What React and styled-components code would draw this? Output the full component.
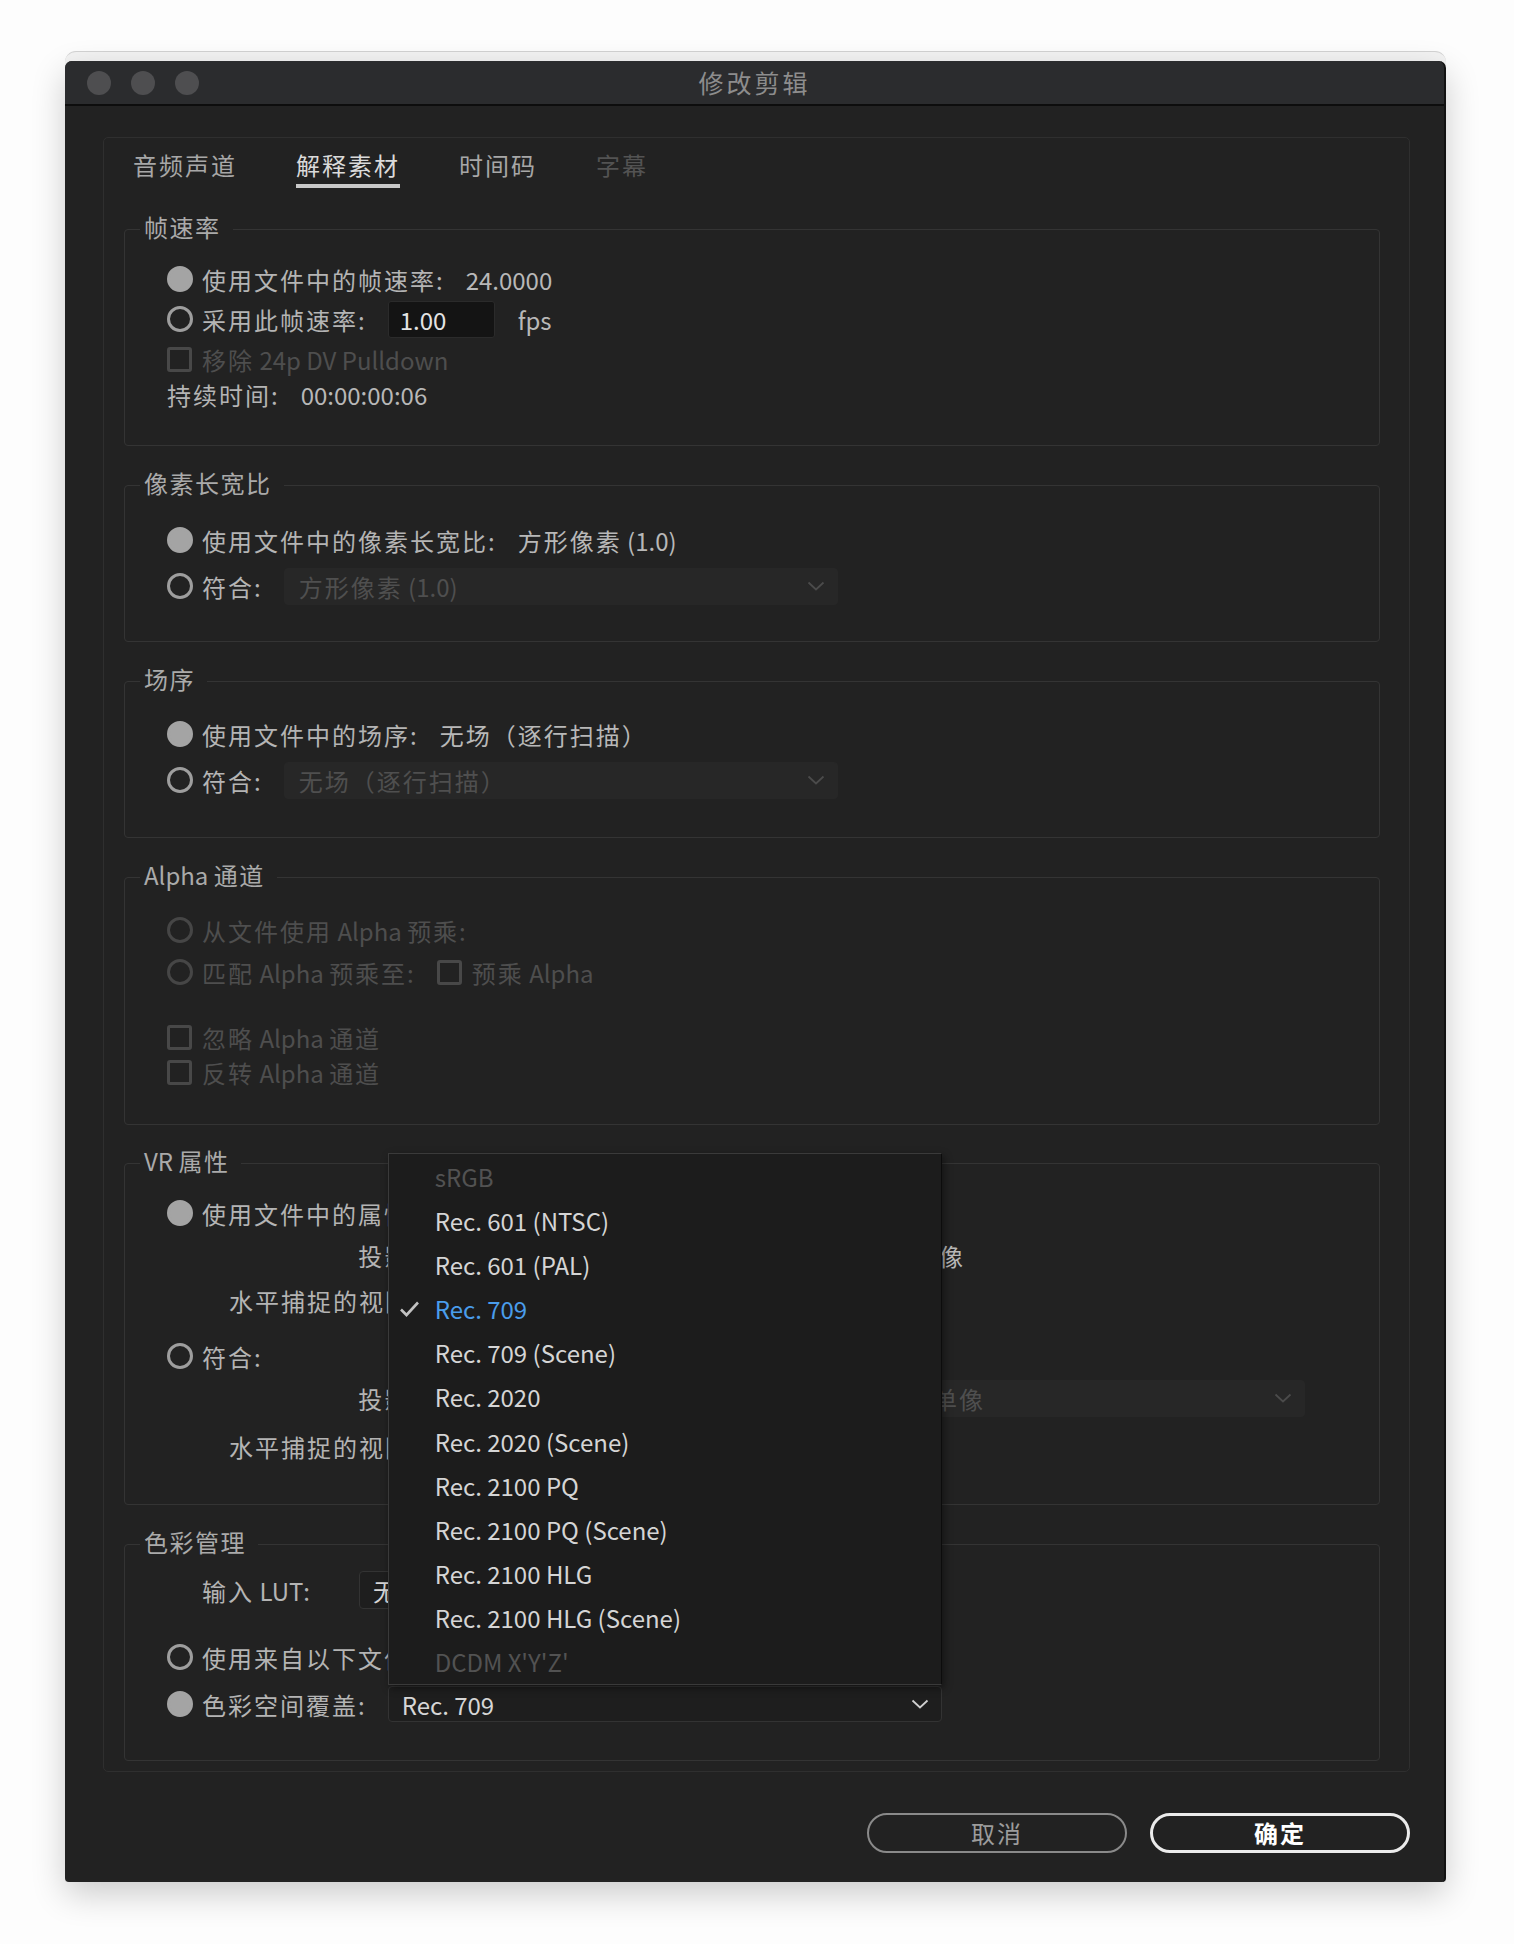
import React from "react";
import styled, { createGlobalStyle } from "styled-components";

const GlobalStyle = createGlobalStyle`
  html, body {
    margin: 0;
    padding: 0;
    background: #fdfdfd;
  }
  body {
    font-family: "Noto Sans CJK SC", "Noto Sans", sans-serif;
    -webkit-font-smoothing: antialiased;
  }
  * {
    box-sizing: border-box;
  }
`;

const tones = {
  normal: "#b4b4b4",
  bright: "#d6d6d6",
  off: "#4e4e4e",
};

const menuItems = [
  { label: "sRGB", disabled: true },
  { label: "Rec. 601 (NTSC)" },
  { label: "Rec. 601 (PAL)" },
  { label: "Rec. 709", selected: true },
  { label: "Rec. 709 (Scene)" },
  { label: "Rec. 2020" },
  { label: "Rec. 2020 (Scene)" },
  { label: "Rec. 2100 PQ" },
  { label: "Rec. 2100 PQ (Scene)" },
  { label: "Rec. 2100 HLG" },
  { label: "Rec. 2100 HLG (Scene)" },
  { label: "DCDM X'Y'Z'", disabled: true },
];

function Chevron({ color }) {
  return (
    <svg width="18" height="10" viewBox="0 0 18 10">
      <path d="M1.5 1.5 L9 8.5 L16.5 1.5" fill="none" stroke={color} strokeWidth="1.8" />
    </svg>
  );
}

function Tick() {
  return (
    <svg width="21" height="18" viewBox="0 0 21 18">
      <path d="M2 9.5 L7.5 15 L19 2.5" fill="none" stroke="#c2c2c2" strokeWidth="2.6" />
    </svg>
  );
}

function Dropdown({ value, width, disabled, ml, h, children }) {
  return (
    <SelectBox $w={width} $off={disabled} $ml={ml} $h={h}>
      <span>{value}</span>
      <Chevron color={disabled ? "#4b4b4b" : "#cfcfcf"} />
      {children}
    </SelectBox>
  );
}

function ColorMenu() {
  return (
    <Menu>
      {menuItems.map((item) => (
        <MenuItem key={item.label} $off={item.disabled} $on={item.selected}>
          <TickSlot>{item.selected ? <Tick /> : null}</TickSlot>
          {item.label}
        </MenuItem>
      ))}
    </Menu>
  );
}

export default function App() {
  return (
    <Page>
      <GlobalStyle />
      <Frame>
        <Window>
          <TitleBar>
            <Lights>
              <Light />
              <Light />
              <Light />
            </Lights>
            <Title>修改剪辑</Title>
            <span />
          </TitleBar>

          <Body>
            <Panel>
              <Tabs>
                <Tab>音频声道</Tab>
                <Tab $active>解释素材</Tab>
                <Tab>时间码</Tab>
                <Tab $off>字幕</Tab>
              </Tabs>

              <Group $mt={27}>
                <Legend>帧速率</Legend>
                <Rows $pt={16} $pb={36}>
                  <Row>
                    <Radio $filled />
                    <Text>使用文件中的帧速率:</Text>
                    <Value $latin>24.0000</Value>
                  </Row>
                  <Row>
                    <Radio />
                    <Text>采用此帧速率:</Text>
                    <NumberBox>1.00</NumberBox>
                    <Value $latin $ml={23}>fps</Value>
                  </Row>
                  <Row>
                    <Check />
                    <Text $tone="off">
                      移除<Latin> 24p DV Pulldown</Latin>
                    </Text>
                  </Row>
                  <Row $h={30}>
                    <Text>持续时间:</Text>
                    <Value $latin>00:00:00:06</Value>
                  </Row>
                </Rows>
              </Group>

              <Group $mt={25}>
                <Legend>像素长宽比</Legend>
                <Rows $pt={21} $pb={35}>
                  <Row>
                    <Radio $filled />
                    <Text>使用文件中的像素长宽比:</Text>
                    <Value>
                      方形像素<Latin> (1.0)</Latin>
                    </Value>
                  </Row>
                  <Row $mt={6}>
                    <Radio />
                    <Text>符合:</Text>
                    <Dropdown
                      value={<>方形像素<Latin> (1.0)</Latin></>}
                      width={554}
                      disabled
                    />
                  </Row>
                </Rows>
              </Group>

              <Group $mt={25}>
                <Legend>场序</Legend>
                <Rows $pt={19} $pb={37}>
                  <Row>
                    <Radio $filled />
                    <Text>使用文件中的场序:</Text>
                    <Value>无场（逐行扫描）</Value>
                  </Row>
                  <Row $mt={6}>
                    <Radio />
                    <Text>符合:</Text>
                    <Dropdown value="无场（逐行扫描）" width={554} disabled />
                  </Row>
                </Rows>
              </Group>

              <Group $mt={25}>
                <Legend>
                  <Latin>Alpha </Latin>通道
                </Legend>
                <Rows $pt={19} $pb={35}>
                  <Row>
                    <Radio $off />
                    <Text $tone="off">
                      从文件使用<Latin> Alpha </Latin>预乘:
                    </Text>
                  </Row>
                  <Row $mt={2}>
                    <Radio $off />
                    <Text $tone="off">
                      匹配<Latin> Alpha </Latin>预乘至:
                    </Text>
                    <Check $ml={21} />
                    <Text $tone="off">
                      预乘<Latin> Alpha</Latin>
                    </Text>
                  </Row>
                  <Row $mt={28} $h={34}>
                    <Check />
                    <Text $tone="off">
                      忽略<Latin> Alpha </Latin>通道
                    </Text>
                  </Row>
                  <Row $mt={1} $h={34}>
                    <Check />
                    <Text $tone="off">
                      反转<Latin> Alpha </Latin>通道
                    </Text>
                  </Row>
                </Rows>
              </Group>

              <Group $mt={24}>
                <Legend>
                  <Latin>VR </Latin>属性
                </Legend>
                <Rows $pt={16} $pb={38}>
                  <Row>
                    <Radio $filled />
                    <Text>使用文件中的属性:</Text>
                  </Row>
                  <Row $mt={2} $indent={62}>
                    <FieldLabel $w={190}>投影:</FieldLabel>
                    <Value>无</Value>
                    <FieldLabel $w={426}>布局:</FieldLabel>
                    <Value>单像</Value>
                  </Row>
                  <Row $mt={5} $indent={62}>
                    <FieldLabel $w={190}>水平捕捉的视图:</FieldLabel>
                    <Value $latin>0°</Value>
                  </Row>
                  <Row $mt={16}>
                    <Radio />
                    <Text>符合:</Text>
                  </Row>
                  <Row $mt={2} $indent={62}>
                    <FieldLabel $w={190}>投影:</FieldLabel>
                    <Dropdown value="无" width={340} disabled />
                    <FieldLabel $w={117}>布局:</FieldLabel>
                    <Dropdown value="单像" width={387} disabled ml={21} />
                  </Row>
                  <Row $mt={8} $indent={62}>
                    <FieldLabel $w={190}>水平捕捉的视图:</FieldLabel>
                    <Value $latin>0°</Value>
                  </Row>
                </Rows>
              </Group>

              <Group $mt={25}>
                <Legend>色彩管理</Legend>
                <Rows $pt={12} $pb={36}>
                  <Row $indent={35}>
                    <Text>
                      输入<Latin> LUT</Latin>:
                    </Text>
                    <Dropdown value="无" width={420} ml={47} h={38} />
                  </Row>
                  <Row $mt={27}>
                    <Radio />
                    <Text>使用来自以下文件的色彩空间:</Text>
                  </Row>
                  <Row $mt={7}>
                    <Radio $filled />
                    <Text>色彩空间覆盖:</Text>
                    <Dropdown value={<Latin>Rec. 709</Latin>} width={554} h={36}>
                      <ColorMenu />
                    </Dropdown>
                  </Row>
                </Rows>
              </Group>
            </Panel>

            <Footer>
              <Button>取消</Button>
              <Button $primary>确定</Button>
            </Footer>
          </Body>
        </Window>
      </Frame>
    </Page>
  );
}

const Page = styled.div`
  width: 1514px;
  height: 1944px;
  padding: 51px 0 0 65px;
  background: #fdfdfd;
`;

const Frame = styled.div`
  width: 1381px;
  padding-top: 9px;
  border-top: 1px solid #d3d3d3;
  border-radius: 11px 11px 0 0;
  background: #f3f3f3;
`;

const Window = styled.div`
  width: 1381px;
  height: 1821px;
  display: flex;
  flex-direction: column;
  background: #222222;
  border-right: 2px solid #121212;
  border-radius: 7px 7px 4px 4px;
  box-shadow: 0 12px 34px rgba(0, 0, 0, 0.2);
`;

const TitleBar = styled.div`
  height: 45px;
  flex: none;
  display: grid;
  grid-template-columns: 1fr auto 1fr;
  align-items: center;
  padding: 0 22px;
  background: #2b2c2e;
  border-bottom: 2px solid #0d0d0d;
  border-radius: 7px 7px 0 0;
`;

const Lights = styled.div`
  display: flex;
  gap: 20px;
`;

const Light = styled.span`
  width: 24px;
  height: 24px;
  border-radius: 50%;
  background: #4e4e50;
`;

const Title = styled.div`
  font-size: 25px;
  letter-spacing: 3px;
  line-height: 1;
  color: #8d8d8d;
`;

const Body = styled.div`
  flex: 1;
  display: flex;
  flex-direction: column;
  padding: 31px 34px 29px 38px;
`;

const Panel = styled.div`
  flex: 1;
  display: flex;
  flex-direction: column;
  padding: 11px 29px 10px 20px;
  border: 1px solid #2f2f2f;
  border-radius: 5px;
`;

const Tabs = styled.div`
  display: flex;
  gap: 59px;
  padding-left: 9px;
`;

const Tab = styled.div`
  font-size: 24px;
  letter-spacing: 2px;
  line-height: 32px;
  padding-bottom: 3px;
  border-bottom: 4px solid ${(p) => (p.$active ? "#c9c9c9" : "transparent")};
  color: ${(p) => (p.$active ? "#dadada" : p.$off ? "#535353" : "#a7a7a7")};
`;

const Group = styled.fieldset`
  margin: ${(p) => p.$mt}px 0 0;
  padding: 0;
  min-width: 0;
  border: 1px solid #343434;
  border-radius: 4px;
`;

const Legend = styled.legend`
  margin-left: 15px;
  padding: 0 12px 4px 4px;
  font-size: 24px;
  letter-spacing: 1.5px;
  line-height: 24px;
  color: #aaaaaa;
`;

const Latin = styled.span`
  letter-spacing: 0;
`;

const Rows = styled.div`
  display: flex;
  flex-direction: column;
  padding: ${(p) => p.$pt}px 0 ${(p) => p.$pb}px 42px;
`;

const Row = styled.div`
  height: ${(p) => p.$h || 40}px;
  margin-top: ${(p) => p.$mt || 0}px;
  padding-left: ${(p) => p.$indent || 0}px;
  display: flex;
  align-items: center;
  font-size: 24px;
  letter-spacing: 2px;
  white-space: nowrap;
`;

const Radio = styled.span`
  flex: none;
  width: 26px;
  height: 26px;
  margin-right: 9px;
  border-radius: 50%;
  border: 3px solid;
  background: ${(p) => (p.$filled ? "#a4a4a4" : "transparent")};
  border-color: ${(p) => (p.$filled ? "#a4a4a4" : p.$off ? "#464646" : "#9e9e9e")};
`;

const Check = styled.span`
  flex: none;
  width: 25px;
  height: 25px;
  margin-left: ${(p) => p.$ml || 0}px;
  margin-right: 10px;
  border: 3px solid #484848;
  border-radius: 3px;
`;

const Text = styled.span`
  color: ${(p) => tones[p.$tone || "normal"]};
`;

const Value = styled.span`
  margin-left: ${(p) => (p.$ml === undefined ? 21 : p.$ml)}px;
  color: #b8b8b8;
  letter-spacing: ${(p) => (p.$latin ? 0 : 2)}px;
`;

const FieldLabel = styled.span`
  flex: none;
  width: ${(p) => p.$w}px;
  text-align: right;
  color: ${tones.normal};
`;

const NumberBox = styled.div`
  width: 107px;
  height: 37px;
  margin-left: 21px;
  padding-left: 11px;
  display: flex;
  align-items: center;
  background: #141414;
  border: 1px solid #2b2b2b;
  border-radius: 3px;
  color: #e4e4e4;
  letter-spacing: 0;
`;

const SelectBox = styled.div`
  position: relative;
  flex: none;
  width: ${(p) => p.$w}px;
  height: ${(p) => p.$h || 37}px;
  margin-left: ${(p) => (p.$ml === undefined ? 21 : p.$ml)}px;
  padding: 0 12px 0 ${(p) => (p.$off ? 14 : 13)}px;
  display: flex;
  align-items: center;
  justify-content: space-between;
  border-radius: 4px;
  background: ${(p) => (p.$off ? "#272727" : "#1e1e1e")};
  border: 1px solid ${(p) => (p.$off ? "#272727" : "#333333")};
  color: ${(p) => (p.$off ? "#4f4f4f" : "#d6d6d6")};
`;

const Menu = styled.div`
  position: absolute;
  left: -1px;
  bottom: calc(100% + 2px);
  z-index: 10;
  width: 554px;
  display: flex;
  flex-direction: column;
  background: #1c1c1c;
  border: 1px solid #3a3a3a;
  border-right-color: #0c0c0c;
  box-shadow: 2px 3px 8px rgba(0, 0, 0, 0.45);
`;

const MenuItem = styled.div`
  height: 44.17px;
  display: flex;
  align-items: center;
  padding-left: 10px;
  font-size: 24px;
  letter-spacing: 0;
  color: ${(p) => (p.$on ? "#4a9deb" : p.$off ? "#525252" : "#d5d5d5")};
`;

const TickSlot = styled.span`
  width: 36px;
  display: flex;
  align-items: center;
`;

const Footer = styled.div`
  height: 40px;
  margin-top: 41px;
  display: flex;
  justify-content: flex-end;
  gap: 23px;
`;

const Button = styled.button`
  width: 260px;
  height: 40px;
  border-radius: 20px;
  background: transparent;
  font-family: inherit;
  font-size: 24px;
  letter-spacing: 2px;
  line-height: 1;
  border: ${(p) => (p.$primary ? "3px solid #ececec" : "2.5px solid #8a8a8a")};
  color: ${(p) => (p.$primary ? "#ffffff" : "#9c9c9c")};
  font-weight: ${(p) => (p.$primary ? 700 : 400)};
`;
